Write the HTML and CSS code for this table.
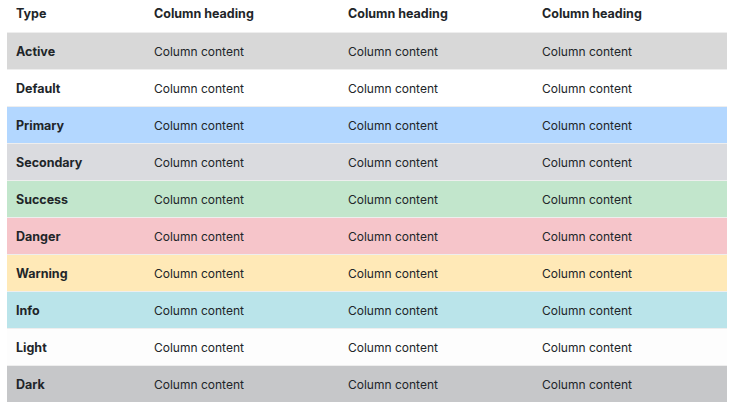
FILE: index.html
```html
<!DOCTYPE html>
<html>
<head>
<meta charset="utf-8">
<link rel="stylesheet" href="styles.css">
</head>
<body>
<table class="table">
  <colgroup>
    <col class="col-type">
    <col class="col-data">
    <col class="col-data">
    <col class="col-data">
  </colgroup>
  <thead>
    <tr><th>Type</th><th>Column heading</th><th>Column heading</th><th>Column heading</th></tr>
  </thead>
  <tbody>
    <tr class="row-active"><th>Active</th><td>Column content</td><td>Column content</td><td>Column content</td></tr>
    <tr class="row-default"><th>Default</th><td>Column content</td><td>Column content</td><td>Column content</td></tr>
    <tr class="row-primary"><th>Primary</th><td>Column content</td><td>Column content</td><td>Column content</td></tr>
    <tr class="row-secondary"><th>Secondary</th><td>Column content</td><td>Column content</td><td>Column content</td></tr>
    <tr class="row-success"><th>Success</th><td>Column content</td><td>Column content</td><td>Column content</td></tr>
    <tr class="row-danger"><th>Danger</th><td>Column content</td><td>Column content</td><td>Column content</td></tr>
    <tr class="row-warning"><th>Warning</th><td>Column content</td><td>Column content</td><td>Column content</td></tr>
    <tr class="row-info"><th>Info</th><td>Column content</td><td>Column content</td><td>Column content</td></tr>
    <tr class="row-light"><th>Light</th><td>Column content</td><td>Column content</td><td>Column content</td></tr>
    <tr class="row-dark"><th>Dark</th><td>Column content</td><td>Column content</td><td>Column content</td></tr>
  </tbody>
</table>
</body>
</html>
```

FILE: styles.css
```css
html, body {
  margin: 0;
  padding: 0;
  background: #ffffff;
}
body {
  font-family: Inter, "Noto Sans", "Liberation Sans", sans-serif;
  font-size: 12px;
  line-height: 20px;
  color: #212529;
}
.table {
  margin-left: 7px;
  width: 720px;
  border-collapse: collapse;
  table-layout: fixed;
}
.col-type { width: 138px; }
.col-data { width: 194px; }
.table th, .table td {
  text-align: left;
  vertical-align: top;
  padding: 9px 8px 7px 9px;
  white-space: nowrap;
}
.table th { font-weight: 700; font-size: 12.5px; }
.table thead th {
  padding-top: 4px;
  padding-bottom: 8px;
}
.table tbody tr { border-top: 1px solid #eeeeee; }
.row-active { background: #d8d8d8; }
.row-default { background: #ffffff; }
.row-primary { background: #b3d7ff; }
.row-secondary { background: #dadbdf; }
.row-success { background: #c2e6cc; }
.row-danger { background: #f6c5ca; }
.row-warning { background: #ffe9b7; }
.row-info { background: #bae4ea; }
.row-light { background: #fdfdfd; }
.row-dark { background: #c6c7c9; }
```
